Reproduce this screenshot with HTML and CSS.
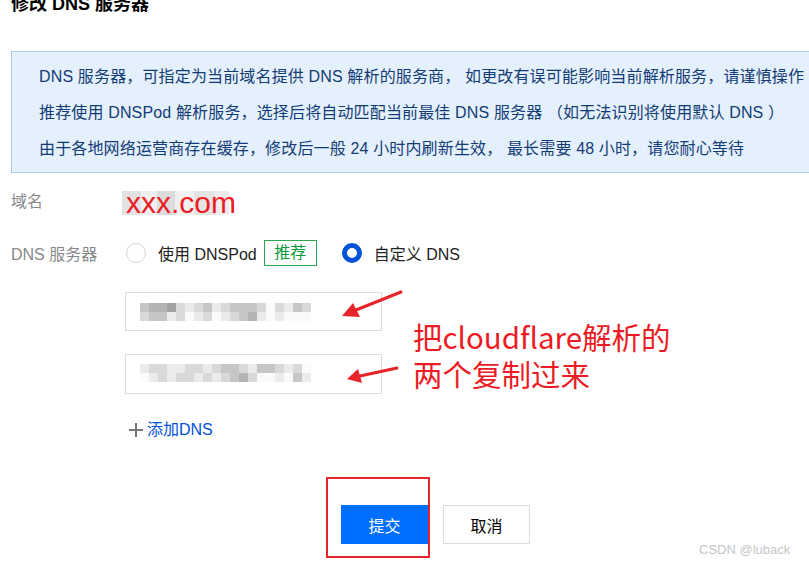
FILE: index.html
```html
<!doctype html>
<html>
<head>
<meta charset="utf-8">
<title>修改 DNS 服务器</title>
<link rel="stylesheet" href="styles.css">
</head>

<body>
<div class="page">
	<h3 class="title">修改 DNS 服务器</h3>

	<div class="tips">
		<p>DNS 服务器，可指定为当前域名提供 DNS 解析的服务商， 如更改有误可能影响当前解析服务，请谨慎操作</p>
		<p>推荐使用 DNSPod 解析服务，选择后将自动匹配当前最佳 DNS 服务器 （如无法识别将使用默认 DNS ）</p>
		<p>由于各地网络运营商存在缓存，修改后一般 24 小时内刷新生效， 最长需要 48 小时，请您耐心等待</p>
	</div>

	<div class="form">
		<div class="row row-domain">
			<label>域名</label>
			<div class="val"><span class="domain">xxx.com</span></div>
		</div>

		<div class="row row-dns">
			<label>DNS 服务器</label>
			<div class="val radios">
				<span class="radio"><i></i>使用 DNSPod</span>
				<span class="tag">推荐</span>
				<span class="radio on"><i></i>自定义 DNS</span>
			</div>
		</div>

		<div class="row">
			<label></label>
			<div class="val inputs">
				<div class="ipt">
					<div class="mosaic">
						<b class="c3"></b><b class="c4"></b><b class="c4"></b><b class="c5"></b><b class="c2"></b><b class="c1"></b><b class="c2"></b><b class="c3"></b><b class="c1"></b><b class="c2"></b><b class="c3"></b><b class="c3"></b><b class="c3"></b><b class="c2"></b><b class="c0"></b><b class="c2"></b><b class="c1"></b><b class="c3"></b><b class="c2"></b>
					</div>
					<div class="mosaic">
						<b class="c2"></b><b class="c3"></b><b class="c3"></b><b class="c1"></b><b class="c2"></b><b class="c0"></b><b class="c1"></b><b class="c2"></b><b class="c0"></b><b class="c1"></b><b class="c2"></b><b class="c3"></b><b class="c4"></b><b class="c1"></b><b class="c0"></b><b class="c1"></b><b class="c0"></b><b class="c0"></b><b class="c0"></b>
					</div>
				</div>
				<div class="ipt">
					<div class="mosaic">
						<b class="c1"></b><b class="c2"></b><b class="c2"></b><b class="c1"></b><b class="c1"></b><b class="c2"></b><b class="c2"></b><b class="c1"></b><b class="c2"></b><b class="c3"></b><b class="c3"></b><b class="c2"></b><b class="c1"></b><b class="c3"></b><b class="c3"></b><b class="c2"></b><b class="c1"></b><b class="c2"></b><b class="c0"></b>
					</div>
					<div class="mosaic">
						<b class="c0"></b><b class="c1"></b><b class="c2"></b><b class="c1"></b><b class="c2"></b><b class="c2"></b><b class="c1"></b><b class="c2"></b><b class="c1"></b><b class="c2"></b><b class="c3"></b><b class="c4"></b><b class="c2"></b><b class="c0"></b><b class="c0"></b><b class="c1"></b><b class="c0"></b><b class="c3"></b><b class="c1"></b>
					</div>
				</div>
				<a class="add" href="#">
					<svg class="plus" width="14" height="14" viewBox="0 0 14 14"><path d="M7 0v14M0 7h14" stroke="#777" stroke-width="2"/></svg>添加DNS
				</a>
			</div>
		</div>

		<div class="actions">
			<button class="btn primary">提交</button>
			<button class="btn">取消</button>
		</div>
	</div>
</div>

<!-- 标注：箭头和说明 -->
<svg class="marks" width="809" height="567" viewBox="0 0 809 567">
	<g stroke="#e8242b" stroke-width="3" stroke-linecap="round">
		<line x1="401" y1="292" x2="356" y2="310"/>
		<line x1="397" y1="368" x2="360" y2="376"/>
	</g>
	<g fill="#e8242b">
		<polygon points="342,316 353,303 360,317"/>
		<polygon points="347,379 358,369 362,383"/>
	</g>
	<rect x="327" y="478" width="102" height="79" fill="none" stroke="#e8242b" stroke-width="2"/>
</svg>
<div class="note">把cloudflare解析的<br>两个复制过来</div>
<div class="wm">CSDN @luback</div>
</body>
</html>
```

FILE: styles.css
```css
* {margin:0; padding:0; box-sizing:border-box;}

body {width:809px; height:567px; overflow:hidden; position:relative; background:#fff; font-family:"Liberation Sans", "Noto Sans CJK SC", sans-serif; font-size:16px; color:#333;}

.page {padding-left:11px;}

.title {font-size:18px; font-weight:bold; color:#000; line-height:22px; margin-top:-7px;}

.tips {width:820px; margin-top:36px; padding:7px 0 5px 27px; background:#e5f0fd; border:1px solid #a9cbf3; color:#123c75; line-height:36px; letter-spacing:0.15px;}

.row {display:flex;}
.row label {width:115px; flex-shrink:0; color:#888;}
.val {flex:1;}

.row-domain {margin-top:14px; height:30px; align-items:center;}
.row-domain label {margin-top:-4px;}
.domain {display:inline-block; margin-top:4px; font-size:30px; color:#ec1c24; line-height:24px; margin-left:-4px; padding:0 2px 0 4px;
	background:linear-gradient(90deg, #e2e2e2 0 16%, #eeeeee 16% 30%, #dcdcdc 30% 46%, #f0f0f0 46% 62%, #e4e4e4 62% 80%, #ececec 80% 92%, #fff 92%);}

.row-dns {margin-top:21px; height:30px; align-items:center;}
.radios {display:flex; align-items:center;}
.radio {display:flex; align-items:center; color:#222;}
.radio i {width:20px; height:20px; border-radius:50%; border:1px solid #cfd4dc; margin-right:12px;}
.radio.on i {border:5px solid #0052d9;}
.radio.on {margin-left:25px;}
.tag {margin-left:7px; width:53px; height:26px; line-height:24px; text-align:center; border:1px solid #2ba64f; color:#0a9a3c; font-size:16px;}

.inputs {margin-top:24px; margin-left:-1px;}
.ipt {width:257px; height:39px; border:1px solid #dcdcdc; margin-bottom:23px; padding:10px 0 0 14px;}
.ipt + .ipt {height:40px; padding-top:9px;}
.mosaic {display:flex; height:9px;}
.mosaic b {width:9px; height:9px;}
.c0 {background:#fafafa;}
.c1 {background:#ebebeb;}
.c2 {background:#d9d9d9;}
.c3 {background:#c6c6c6;}
.c4 {background:#b4b4b4;}
.c5 {background:#a2a2a2;}

.add {display:flex; align-items:center; padding-top:3px; margin-left:3px; color:#0052d9; text-decoration:none; font-size:16px; line-height:20px;}
.add .plus {margin:0 4px 0 1px;}

.actions {display:flex; gap:15px; margin-top:65px; padding-left:330px;}
.btn {width:87px; height:39px; border:1px solid #dcdcdc; background:#fff; color:#000; font-family:"Noto Sans CJK SC", sans-serif; font-size:16px;}
.btn.primary {background:#006eff; border-color:#006eff; color:#fff;}

.marks {position:absolute; left:0; top:0;}
.note {position:absolute; left:413px; top:318px; color:#ec1c24; font-family:"Noto Sans CJK SC", sans-serif; font-size:29.5px; line-height:37px;}
.wm {position:absolute; left:699px; top:542px; color:#c6c6c6; font-size:13px;}
```
